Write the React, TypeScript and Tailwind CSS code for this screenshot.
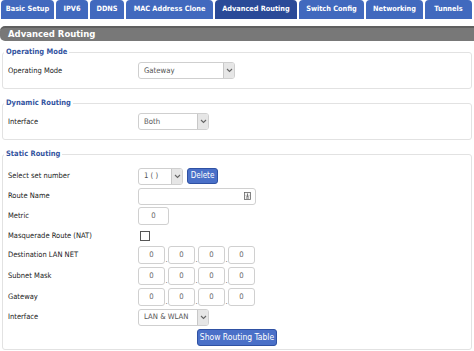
import React from "react";

const tabs = [
  { t: "Basic Setup", w: 53 },
  { t: "IPV6", w: 32 },
  { t: "DDNS", w: 34 },
  { t: "MAC Address Clone", w: 87 },
  { t: "Advanced Routing", w: 82, active: true },
  { t: "Switch Config", w: 65 },
  { t: "Networking", w: 57 },
  { t: "Tunnels", w: 47 },
];

const COND = "font-['DejaVu_Sans_Condensed','DejaVu_Sans',sans-serif] font-stretch-condensed";

function Arrow() {
  return (
    <span className="flex h-full w-[11px] items-center justify-center border-l border-[#c8c8c8] bg-[#e6e6e6]">
      <svg width="7" height="5" viewBox="0 0 7 5">
        <path d="M1 1 L3.5 3.5 L6 1" fill="none" stroke="#666" strokeWidth="1.1" />
      </svg>
    </span>
  );
}

function Select({ value, w }: { value: string; w: string }) {
  return (
    <div className={`flex h-[17px] ${w} items-stretch overflow-hidden rounded-[3px] border border-[#cfcfcf] bg-white`}>
      <span className={`flex flex-1 items-center whitespace-nowrap pl-[5px] text-[7.7px] text-[#555] ${COND}`}>{value}</span>
      <Arrow />
    </div>
  );
}

function Row({ label, children, h = "h-[20px]" }: { label: string; children?: React.ReactNode; h?: string }) {
  return (
    <div className={`flex ${h} items-center`}>
      <div className={`w-[130px] whitespace-nowrap text-[7.5px] text-[#1a1a1a] ${COND}`}>{label}</div>
      <div className="flex items-center">{children}</div>
    </div>
  );
}

function Ip() {
  return (
    <div className="flex items-end">
      {[0, 1, 2, 3].map((i) => (
        <React.Fragment key={i}>
          {i > 0 && <span className="w-[3px] text-center text-[8px] leading-[8px] text-[#555]">.</span>}
          <div
            className={`flex h-[18px] w-[27px] items-center justify-center rounded-[3px] border border-[#d0d0d0] bg-white text-[7.7px] text-[#666] ${COND}`}
          >
            0
          </div>
        </React.Fragment>
      ))}
    </div>
  );
}

function Fieldset({ legend, children, cls }: { legend: string; children: React.ReactNode; cls: string }) {
  return (
    <fieldset className={`mx-[2px] rounded-[3px] border border-[#e2e2e2] px-[5px] ${cls}`}>
      <legend className={`ml-[-4px] px-[2px] text-[7.5px] font-bold leading-[10px] text-[#34549f] ${COND}`}>{legend}</legend>
      {children}
    </fieldset>
  );
}

export default function App() {
  return (
    <div className="h-[351px] w-[474px] overflow-hidden bg-white font-['Liberation_Sans',Arial,sans-serif]">
      <div className="flex h-[19px] gap-[2px] pl-[1px]">
        {tabs.map((tb) => (
          <div
            key={tb.t}
            className={`flex items-center justify-center whitespace-nowrap rounded-t-[4px] text-[7.3px] font-bold text-white ${COND} ${
              tb.active ? "bg-[#2a4a98]" : "bg-[#4169be]"
            }`}
            style={{ width: tb.w }}
          >
            {tb.t}
          </div>
        ))}
      </div>
      <div className="mt-[7px] flex h-[15px] items-center rounded-l-[5px] border-t-2 border-[#5f5f5f] bg-[#787878] pl-[8px] font-['DejaVu_Sans',sans-serif] text-[8.5px] font-bold text-white">
        Advanced Routing
      </div>
      <div className="mt-[6px]">
        <Fieldset legend="Operating Mode" cls="pt-[4px] pb-[8px]">
          <Row label="Operating Mode" h="h-[19px]">
            <Select value="Gateway" w="w-[97px]" />
          </Row>
        </Fieldset>
        <div className="h-[9px]" />
        <Fieldset legend="Dynamic Routing" cls="pt-[4px] pb-[8px]">
          <Row label="Interface" h="h-[19px]">
            <Select value="Both" w="w-[71px]" />
          </Row>
        </Fieldset>
        <div className="h-[9px]" />
        <Fieldset legend="Static Routing" cls="pt-[7px] pb-[1px]">
          <Row label="Select set number">
            <Select value="1 ( )" w="w-[45px]" />
            <button
              className={`ml-[4px] flex h-[16px] w-[31px] items-center justify-center rounded-[3px] border border-[#2f51a3] bg-[#4a70c8] text-[8px] text-white ${COND}`}
            >
              Delete
            </button>
          </Row>
          <Row label="Route Name" h="h-[20px]">
            <div className="flex h-[17px] w-[118px] items-center justify-end rounded-[3px] border border-[#d0d0d0] bg-white pr-[4px]">
              <svg width="7" height="8" viewBox="0 0 7 8">
                <rect x="0.5" y="0.5" width="6" height="7" fill="#f4f4f4" stroke="#666" strokeWidth="0.8" />
                <path d="M3.5 1.5 V4.5 M2 3.5 L3.5 5 L5 3.5 M2 6 H5" fill="none" stroke="#555" strokeWidth="0.8" />
              </svg>
            </div>
          </Row>
          <Row label="Metric" h="h-[20px]">
            <div
              className={`flex h-[18px] w-[31px] items-center justify-center rounded-[3px] border border-[#d0d0d0] bg-white text-[7.7px] text-[#666] ${COND}`}
            >
              0
            </div>
          </Row>
          <Row label="Masquerade Route (NAT)" h="h-[19px]">
            <div className="ml-[2px] h-[10px] w-[10px] border border-[#555] bg-white" />
          </Row>
          <Row label="Destination LAN NET" h="h-[20px]">
            <Ip />
          </Row>
          <Row label="Subnet Mask" h="h-[21px]">
            <Ip />
          </Row>
          <Row label="Gateway" h="h-[21px]">
            <Ip />
          </Row>
          <Row label="Interface" h="h-[20px]">
            <Select value="LAN & WLAN" w="w-[71px]" />
          </Row>
          <div className="flex h-[21px] items-center pl-[189px]">
            <button
              className={`flex h-[17px] w-[80px] items-center justify-center whitespace-nowrap rounded-[3px] border border-[#2f51a3] bg-[#4a70c8] text-[8.5px] text-white ${COND}`}
            >
              Show Routing Table
            </button>
          </div>
        </Fieldset>
      </div>
    </div>
  );
}
